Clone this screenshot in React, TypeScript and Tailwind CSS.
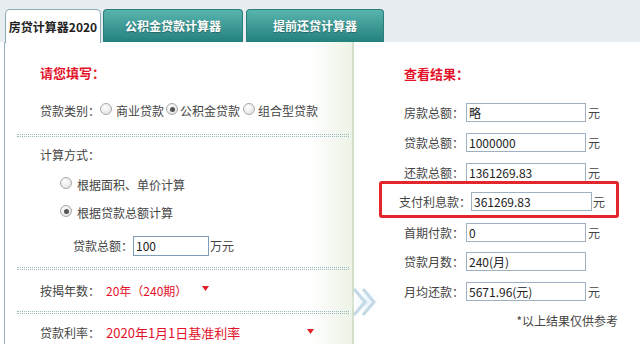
import React from "react";

function Radio({ checked = false }: { checked?: boolean }) {
  return (
    <span className="relative inline-flex h-[12px] w-[12px] shrink-0 items-center justify-center rounded-full border border-[#a9a9a9] bg-[radial-gradient(circle_at_40%_35%,#ffffff,#dcdcdc)] -translate-y-[2px]">
      {checked && <span className="h-[5px] w-[5px] rounded-full bg-[#555]" />}
    </span>
  );
}

function Dotted() {
  return <div className="ml-[12px] h-[3px] w-[332px] border-y border-dotted border-[#9bbac0]" />;
}

function Tri() {
  return (
    <svg width="7" height="5" viewBox="0 0 7 5" className="shrink-0">
      <polygon points="0,0 7,0 3.5,5" fill="#e0202a" />
    </svg>
  );
}

function ResultRow({ label, value, unit = true, mt }: { label: string; value: string; unit?: boolean; mt: string }) {
  return (
    <div className={`flex h-[19px] items-center pl-[50px] ${mt}`}>
      <span className="w-[62px] shrink-0 text-[#444]">{label}</span>
      <div className="flex h-[19px] w-[120px] shrink-0 items-center border border-[#9db1c3] bg-white pl-[2px] text-[12px] text-[#222]">
        {value}
      </div>
      {unit && <span className="ml-[2px] text-[#444]">元</span>}
    </div>
  );
}

export default function App() {
  return (
    <div className="h-[344px] w-[640px] overflow-hidden whitespace-nowrap bg-white font-['Noto_Sans_CJK_SC','Noto_Sans',sans-serif] text-[12px] leading-[20px] text-[#444]">
      {/* Tab bar */}
      <div className="flex h-[42px] items-end bg-[#e7edf1] pl-[5px]">
        <div className="relative -mb-px flex h-[34px] w-[96px] items-center justify-center rounded-t-[5px] border border-b-0 border-[#8fa8b6] bg-white text-[12px] font-bold text-[#222]">
          房贷计算器2020
        </div>
        <div className="ml-[2px] flex h-[33px] w-[140px] items-center justify-center rounded-t-[4px] border border-b-0 border-[#2b7d79] bg-gradient-to-b from-[#58b4ae] to-[#22817d] text-[12px] font-bold text-white [text-shadow:0_1px_1px_rgba(0,0,0,0.3)]">
          公积金贷款计算器
        </div>
        <div className="ml-[3px] flex h-[33px] w-[138px] items-center justify-center rounded-t-[4px] border border-b-0 border-[#2b7d79] bg-gradient-to-b from-[#58b4ae] to-[#22817d] text-[12px] font-bold text-white [text-shadow:0_1px_1px_rgba(0,0,0,0.3)]">
          提前还贷计算器
        </div>
      </div>

      <div className="flex h-[302px]">
        {/* Left panel */}
        <div className="ml-[4px] flex w-[350px] shrink-0 flex-col border-l border-r-2 border-l-[#93b0c4] border-r-[#d3dfc8] bg-gradient-to-r from-white from-[88%] to-[#edf3e6]">
          <div className="mt-[21px] h-[20px] pl-[35px] text-[13px] font-bold text-[#e3122a]">请您填写：</div>

          <div className="mt-[18px] flex h-[20px] items-center pl-[35px]">
            <span>贷款类别：</span>
            <Radio />
            <span className="ml-[4px]">商业贷款</span>
            <span className="ml-[2px] flex"><Radio checked /></span>
            <span className="ml-[2px]">公积金贷款</span>
            <span className="ml-[3px] flex"><Radio /></span>
            <span className="ml-[3px]">组合型贷款</span>
          </div>

          <div className="mt-[13px]"><Dotted /></div>

          <div className="mt-[8px] h-[20px] pl-[35px]">计算方式：</div>

          <div className="mt-[10px] flex h-[20px] items-center pl-[55px]">
            <Radio />
            <span className="ml-[5px]">根据面积、单价计算</span>
          </div>

          <div className="mt-[8px] flex h-[20px] items-center pl-[55px]">
            <Radio checked />
            <span className="ml-[5px]">根据贷款总额计算</span>
          </div>

          <div className="mt-[13px] flex h-[20px] items-center pl-[68px]">
            <span className="w-[60px] shrink-0">贷款总额：</span>
            <div className="flex h-[20px] w-[76px] shrink-0 items-center border border-[#7f9db9] bg-white pl-[2px] text-[12px] text-[#222]">100</div>
            <span className="ml-[1px]">万元</span>
          </div>

          <div className="mt-[11px]"><Dotted /></div>

          <div className="mt-[11px] flex h-[20px] items-center pl-[35px]">
            <span>按揭年数：</span>
            <span className="ml-[6px] text-[#e3122a]">20年（240期）</span>
            <span className="ml-[15px] flex -translate-y-[3px]"><Tri /></span>
          </div>

          <div className="mt-[10px]"><Dotted /></div>

          <div className="mt-[9px] flex h-[20px] items-center pl-[35px]">
            <span>贷款利率：</span>
            <span className="ml-[6px] text-[13px] text-[#e3122a]">2020年1月1日基准利率</span>
            <span className="ml-[67px] flex -translate-y-[2px]"><Tri /></span>
          </div>
        </div>

        {/* Right panel */}
        <div className="relative flex flex-1 flex-col">
          <svg
            width="32"
            height="32"
            viewBox="0 0 32 32"
            className="absolute left-[-4px] top-[244px]"
          >
            <defs>
              <radialGradient id="glow" cx="50%" cy="50%" r="50%">
                <stop offset="0%" stopColor="#e1f0f9" />
                <stop offset="100%" stopColor="#ffffff" stopOpacity="0" />
              </radialGradient>
            </defs>
            <circle cx="16" cy="16" r="16" fill="url(#glow)" />
            <polyline points="4,3 15,16 4,29" fill="none" stroke="#c3d9e6" strokeWidth="3" />
            <polyline points="13,3 24,16 13,29" fill="none" stroke="#c3d9e6" strokeWidth="3" />
          </svg>

          <div className="mt-[22px] h-[20px] pl-[50px] text-[13px] font-bold text-[#e3122a]">查看结果：</div>

          <ResultRow label="房款总额：" value="略" mt="mt-[19px]" />
          <ResultRow label="贷款总额：" value="1000000" mt="mt-[11px]" />
          <ResultRow label="还款总额：" value="1361269.83" mt="mt-[11px]" />

          <div className="relative z-10 ml-[25px] mt-[-1px] flex h-[37px] w-[240px] items-start rounded-[3px] border-[3px] border-[#e3262b] bg-white pl-[17px] pt-[8px]">
            <span className="flex h-[19px] w-[72px] shrink-0 items-center text-[#444]">支付利息款：</span>
            <div className="flex h-[19px] w-[121px] shrink-0 items-center border border-[#9db1c3] bg-white pl-[2px] text-[12px] text-[#222]">
              361269.83
            </div>
            <span className="ml-[1px] flex h-[19px] items-center text-[#444]">元</span>
          </div>

          <ResultRow label="首期付款：" value="0" mt="mt-[5px]" />
          <ResultRow label="贷款月数：" value="240(月)" unit={false} mt="mt-[10px]" />
          <ResultRow label="月均还款：" value="5671.96(元)" mt="mt-[11px]" />

          <div className="mt-[10px] h-[20px] pr-[22px] text-right text-[#444]">*以上结果仅供参考</div>
        </div>
      </div>
    </div>
  );
}
